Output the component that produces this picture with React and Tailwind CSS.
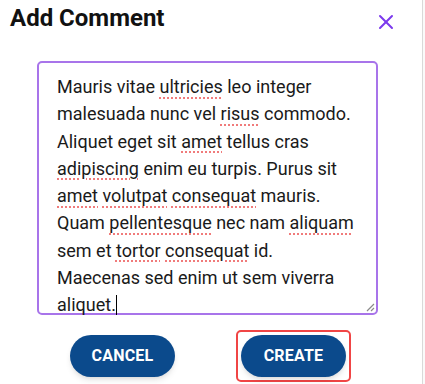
import React from 'react';
import { X } from 'lucide-react';

const LINES = [
  [['Mauris vitae '], ['ultricies', true], [' leo integer']],
  [['malesuada nunc vel '], ['risus', true], [' commodo.']],
  [['Aliquet eget sit '], ['amet', true], [' tellus cras']],
  [['adipiscing', true], [' enim eu turpis. Purus sit']],
  [['amet', true], [' '], ['volutpat', true], [' '], ['consequat', true], [' mauris.']],
  [['Quam '], ['pellentesque', true], [' nec nam '], ['aliquam', true]],
  [['sem et '], ['tortor', true], [' '], ['consequat', true], [' id.']],
  [['Maecenas sed enim ut sem viverra']],
  [['aliquet.']],
];

const Squiggle = ({ children }) => (
  <span className="underline decoration-dotted decoration-[#f07b7b] decoration-[1.5px] underline-offset-[4px]">
    {children}
  </span>
);

const App = () => {
  return (
    <div className="flex h-[384px] w-full bg-[#fafafa]" style={{ fontFamily: 'Roboto, "Noto Sans", sans-serif' }}>
      <div className="w-[423px] h-full bg-white border-r border-[#d9d9d9] flex flex-col">
        {/* Header */}
        <div className="flex items-start justify-between pt-[4px] pl-[10px] pr-[24px]">
          <h2 className="text-[24px] leading-[28px] font-bold text-[#111]">Add Comment</h2>
          <button className="mt-[6px] text-[#7c3aed]">
            <X size={24} strokeWidth={2} />
          </button>
        </div>

        {/* Comment box */}
        <div className="relative mt-[27px] ml-[37px] w-[341px] h-[254px] border-2 border-[#a874ea] rounded-[5px] pt-[10px] pl-[18px] text-[18px] leading-[27.25px] text-[#1a1a1a] whitespace-nowrap">
          {LINES.map((line, i) => (
            <div key={i}>
              {line.map(([txt, bad], j) =>
                bad ? <Squiggle key={j}>{txt}</Squiggle> : <span key={j}>{txt}</span>
              )}
              {i === LINES.length - 1 && (
                <span className="inline-block w-px h-[20px] bg-black align-[-4px]" />
              )}
            </div>
          ))}
          <svg className="absolute right-[1px] bottom-[1px]" width="10" height="10" viewBox="0 0 10 10">
            <path d="M9 2 L2 9 M9 6 L6 9" stroke="#8a8a8a" strokeWidth="1.2" />
          </svg>
        </div>

        {/* Actions */}
        <div className="flex items-center mt-[15px] pl-[70px] gap-[61px]">
          <button className="w-[105px] h-[42px] rounded-full bg-[#0b4a8c] text-white text-[16px] font-bold shadow-md tracking-[0.2px]">
            CANCEL
          </button>
          <div className="border-2 border-[#f04545] rounded-[5px] p-[3px]">
            <button className="w-[105px] h-[42px] rounded-full bg-[#0b4a8c] text-white text-[16px] font-bold shadow-md tracking-[0.2px] block">
              CREATE
            </button>
          </div>
        </div>
      </div>
    </div>
  );
};

export default App;
